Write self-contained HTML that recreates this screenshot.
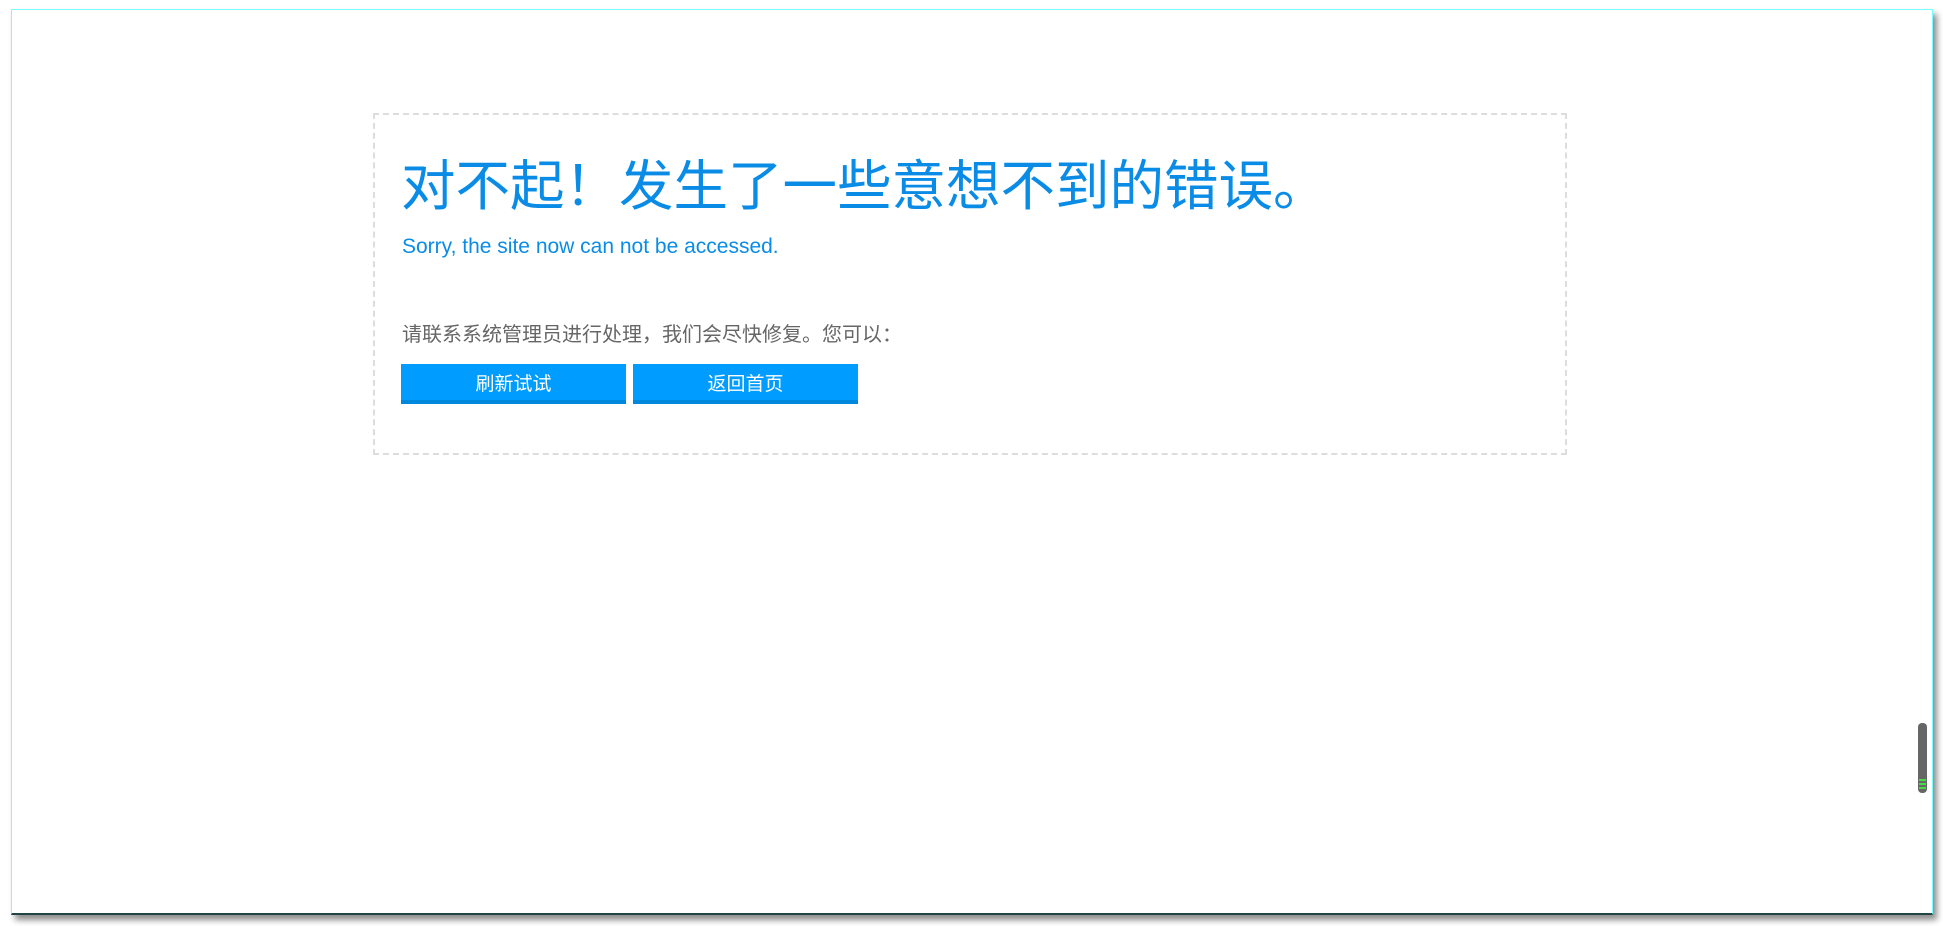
<!DOCTYPE html>
<html><head><meta charset="utf-8"><style>
html,body{margin:0;padding:0;background:#fff;width:1943px;height:926px;overflow:hidden;}
.frame{position:absolute;left:11px;top:9px;width:1920px;height:903px;border:1px solid #7ff;border-bottom:2px solid #244;box-shadow:4px 5px 6px rgba(0,0,0,0.45);background:#fff;}
.box{position:absolute;left:373px;top:113px;width:1190px;height:338px;border:2px dashed #ddd;}
.t{position:absolute;left:401px;top:147px;font:54.5px "Liberation Sans","Noto Sans CJK SC",sans-serif;color:#0a8ce6;line-height:80px;white-space:nowrap;}
.s{position:absolute;left:402px;top:235px;font:21px "Liberation Sans",sans-serif;color:#0a8ce6;white-space:nowrap;}
.c{position:absolute;left:402px;top:318px;font:20px "Liberation Sans","Noto Sans CJK SC",sans-serif;color:#666;white-space:nowrap;}
.b{position:absolute;top:364px;width:225px;height:36px;border-bottom:4px solid #0088dd;background:#009cff;color:#fff;font:19px "Liberation Sans","Noto Sans CJK SC",sans-serif;text-align:center;line-height:41px;}
.sb{position:absolute;left:1918px;top:723px;width:9px;height:70px;border-radius:4px;background:#666;}
.sb i{position:absolute;left:1px;width:7px;height:2px;background:#4d4;}
</style></head><body>
<div class="frame"></div>
<div class="box"></div>
<div class="t">对不起！发生了一些意想不到的错误。</div>
<div class="s">Sorry, the site now can not be accessed.</div>
<div class="c">请联系系统管理员进行处理，我们会尽快修复。您可以：</div>
<div class="b" style="left:401px">刷新试试</div>
<div class="b" style="left:633px">返回首页</div>
<div class="sb"><i style="top:56px"></i><i style="top:60px"></i><i style="top:64px"></i></div>
</body></html>
